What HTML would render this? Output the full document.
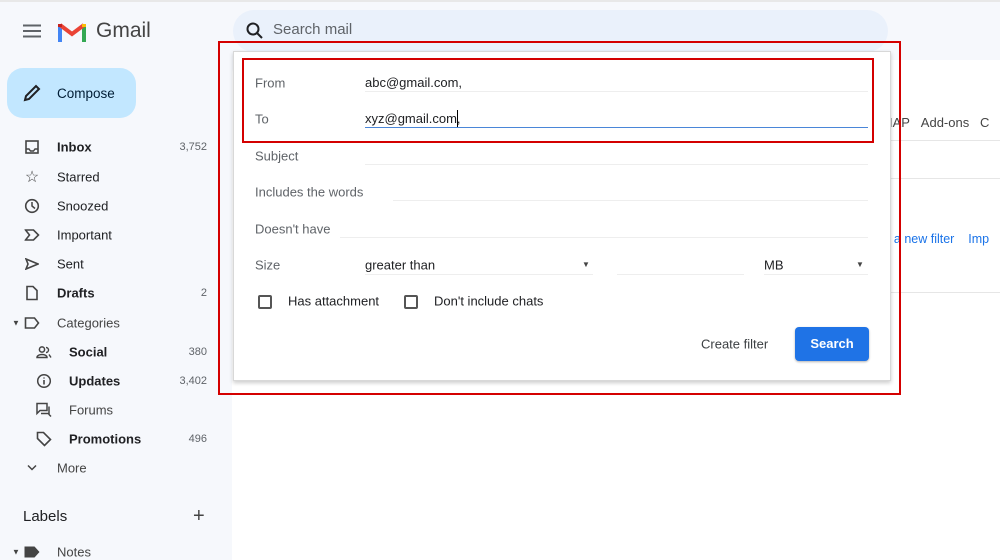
<!DOCTYPE html>
<html><head><meta charset="utf-8"><style>
*{margin:0;padding:0;box-sizing:border-box}
body{width:1000px;height:560px;overflow:hidden;background:#f6f8fc;font-family:"Liberation Sans",Arial,sans-serif;position:relative;color:#202124}
.a{position:absolute;white-space:nowrap}
.nav{font-size:13px;color:#202124;transform:translateY(-50%)}
.b{font-weight:bold}
.cnt{font-size:11px;color:#5f6368;transform:translateY(-50%);right:793px}
.ic{position:absolute;transform:translate(-50%,-50%)}
.lbl{font-size:13px;color:#5f6368;transform:translateY(-50%)}
.ln{position:absolute;height:1px;background:#e6e6e6}
</style></head><body>
<div class="a" style="left:0;top:0;width:1000px;height:2px;background:#e8e8e8"></div>
<!-- main white -->
<div class="a" style="left:232px;top:60px;width:768px;height:500px;background:#fff;border-radius:14px 0 0 0"></div>
<div class="ln" style="left:880px;top:140px;width:120px"></div>
<div class="ln" style="left:880px;top:178px;width:120px"></div>
<div class="ln" style="left:880px;top:292px;width:120px"></div>
<div class="a" style="left:889px;top:115px;font-size:13px;color:#444">IAP&nbsp;&nbsp;&nbsp;Add-ons&nbsp;&nbsp;&nbsp;C</div>
<div class="a" style="left:880px;top:232px;font-size:12.5px;color:#1a73e8">te a new filter&nbsp;&nbsp;&nbsp;&nbsp;Imp</div>
<!-- header -->
<svg class="a" style="left:23px;top:24px" width="18" height="14"><path d="M0 1.5H18M0 7H18M0 12.5H18" stroke="#5f6368" stroke-width="2"/></svg>
<svg class="a" style="left:58px;top:21px" width="28" height="21" viewBox="0 0 28 21"><path d="M2 21V4" stroke="#4285f4" stroke-width="4"/><path d="M26 21V4" stroke="#34a853" stroke-width="4"/><path d="M2 4L14 13L26 4" stroke="#ea4335" stroke-width="4" fill="none"/><path d="M26 3L26 6" stroke="#fbbc04" stroke-width="4"/><path d="M2 3V6" stroke="#c5221f" stroke-width="4"/></svg>
<div class="a" style="left:96px;top:19px;font-size:21px;color:#444">Gmail</div>
<div class="a" style="left:233px;top:10px;width:655px;height:42px;background:#eaf1fb;border-radius:21px"></div>
<svg class="a" style="left:246px;top:22px" width="17" height="17"><circle cx="7" cy="7" r="5.5" stroke="#202124" stroke-width="2" fill="none"/><path d="M11 11L16 16" stroke="#202124" stroke-width="2"/></svg>
<div class="a" style="left:273px;top:21px;font-size:15px;color:#5f6368">Search mail</div>
<!-- compose -->
<div class="a" style="left:7px;top:68px;width:129px;height:50px;background:#c2e7ff;border-radius:16px"></div>
<svg class="a" style="left:23px;top:84px" width="18" height="18"><path d="M2 16L3 12L13 2L16 5L6 15Z" stroke="#202124" stroke-width="2" fill="none"/></svg>
<div class="a" style="left:57px;top:86px;font-size:13.5px;color:#001d35">Compose</div>
<!-- nav -->
<svg class="ic" style="left:32px;top:147px" width="14" height="14"><rect x="1" y="1" width="12" height="12" fill="none" stroke="#444" stroke-width="1.6"/><path d="M1 9H4L5.5 11H8.5L10 9H13" stroke="#444" stroke-width="1.4" fill="none"/></svg>
<div class="a nav b" style="left:57px;top:147px">Inbox</div><div class="a cnt" style="top:147px">3,752</div>
<div class="ic" style="left:32px;top:177px;font-size:16px;color:#444">☆</div><div class="a nav" style="left:57px;top:177px">Starred</div>
<svg class="ic" style="left:32px;top:206px" width="15" height="15"><circle cx="7.5" cy="7.5" r="6.3" fill="none" stroke="#444" stroke-width="1.6"/><path d="M7.5 3.5V7.5L10.5 10" stroke="#444" stroke-width="1.5" fill="none"/></svg>
<div class="a nav" style="left:57px;top:206px">Snoozed</div>
<svg class="ic" style="left:32px;top:235px" width="15" height="12"><path d="M1 1H9L14 6L9 11H1L5 6Z" fill="none" stroke="#444" stroke-width="1.6"/></svg>
<div class="a nav" style="left:57px;top:235px">Important</div>
<svg class="ic" style="left:32px;top:264px" width="14" height="12"><path d="M1 1L13 6L1 11L3 6Z" fill="none" stroke="#444" stroke-width="1.6"/></svg>
<div class="a nav" style="left:57px;top:264px">Sent</div>
<svg class="ic" style="left:32px;top:293px" width="12" height="15"><path d="M1 1H7L11 5V14H1Z" fill="none" stroke="#444" stroke-width="1.6"/></svg>
<div class="a nav b" style="left:57px;top:293px">Drafts</div><div class="a cnt" style="top:293px">2</div>
<div class="ic" style="left:16px;top:323px;font-size:8px;color:#444">▼</div>
<svg class="ic" style="left:32px;top:323px" width="15" height="12"><path d="M1 1H10L14 6L10 11H1Z" fill="none" stroke="#444" stroke-width="1.6"/></svg>
<div class="a nav" style="left:57px;top:323px;color:#444">Categories</div>
<svg class="ic" style="left:44px;top:352px" width="16" height="13"><circle cx="6" cy="4" r="2.6" fill="none" stroke="#444" stroke-width="1.5"/><path d="M1 12C1 8 11 8 11 12Z" fill="none" stroke="#444" stroke-width="1.5"/><path d="M10 2A2.5 2.5 0 0 1 10 7M13 9L15 12" stroke="#444" stroke-width="1.4" fill="none"/></svg>
<div class="a nav b" style="left:69px;top:352px">Social</div><div class="a cnt" style="top:352px">380</div>
<svg class="ic" style="left:44px;top:381px" width="15" height="15"><circle cx="7.5" cy="7.5" r="6.3" fill="none" stroke="#444" stroke-width="1.5"/><path d="M7.5 6.5V11M7.5 4V5" stroke="#444" stroke-width="1.6"/></svg>
<div class="a nav b" style="left:69px;top:381px">Updates</div><div class="a cnt" style="top:381px">3,402</div>
<svg class="ic" style="left:44px;top:410px" width="16" height="15"><path d="M1 1H11V8H4L1 11Z" fill="none" stroke="#444" stroke-width="1.5"/><path d="M13 4V12L15 14M5 11H13" stroke="#444" stroke-width="1.5" fill="none"/></svg>
<div class="a nav" style="left:69px;top:410px;color:#444">Forums</div>
<svg class="ic" style="left:44px;top:439px" width="15" height="15"><path d="M1 1H7L14 8L8 14L1 7Z" fill="none" stroke="#444" stroke-width="1.6"/></svg>
<div class="a nav b" style="left:69px;top:439px">Promotions</div><div class="a cnt" style="top:439px">496</div>
<svg class="ic" style="left:32px;top:468px" width="10" height="7"><path d="M1 1L5 5L9 1" fill="none" stroke="#444" stroke-width="1.5"/></svg>
<div class="a nav" style="left:57px;top:468px;color:#444">More</div>
<div class="a" style="left:23px;top:508px;font-size:15px;color:#202124">Labels</div>
<div class="a" style="left:193px;top:505px;font-size:20px;color:#444">+</div>
<div class="ic" style="left:16px;top:552px;font-size:8px;color:#444">▼</div>
<svg class="ic" style="left:32px;top:552px" width="15" height="11"><path d="M0 0H10L15 5.5L10 11H0Z" fill="#444"/></svg>
<div class="a nav" style="left:57px;top:552px;color:#444">Notes</div>

<!-- dialog -->
<div class="a" style="left:233px;top:51px;width:658px;height:330px;background:#fff;border:1px solid #d8d8d8;box-shadow:0 2px 4px rgba(0,0,0,.2)"></div>
<div class="a lbl" style="left:255px;top:83px">From</div>
<div class="a" style="left:365px;top:75px;font-size:13px;color:#202124">abc@gmail.com,</div>
<div class="ln" style="left:365px;top:91px;width:503px;background:#eee"></div>
<div class="a lbl" style="left:255px;top:119px">To</div>
<div class="a" style="left:365px;top:111px;font-size:13px;color:#202124">xyz@gmail.com,</div>
<div class="a" style="left:457px;top:110px;width:1px;height:17px;background:#000"></div>
<div class="ln" style="left:365px;top:127px;width:503px;background:#4a86d8"></div>
<div class="a lbl" style="left:255px;top:156px">Subject</div>
<div class="ln" style="left:365px;top:164px;width:503px;background:#eee"></div>
<div class="a lbl" style="left:255px;top:192px">Includes the words</div>
<div class="ln" style="left:393px;top:200px;width:475px;background:#eee"></div>
<div class="a lbl" style="left:255px;top:229px">Doesn't have</div>
<div class="ln" style="left:340px;top:237px;width:528px;background:#eee"></div>
<div class="a lbl" style="left:255px;top:265px">Size</div>
<div class="a lbl" style="left:365px;top:265px;color:#202124">greater than</div>
<div class="a" style="left:582px;top:260px;font-size:8px;color:#444">▼</div>
<div class="ln" style="left:365px;top:274px;width:228px;background:#eee"></div>
<div class="ln" style="left:617px;top:274px;width:127px;background:#eee"></div>
<div class="a lbl" style="left:764px;top:265px;color:#202124">MB</div>
<div class="a" style="left:856px;top:260px;font-size:8px;color:#444">▼</div>
<div class="ln" style="left:764px;top:274px;width:104px;background:#eee"></div>
<div class="a" style="left:258px;top:295px;width:14px;height:14px;border:2px solid #555;border-radius:2px"></div>
<div class="a lbl" style="left:288px;top:301px;color:#202124">Has attachment</div>
<div class="a" style="left:404px;top:295px;width:14px;height:14px;border:2px solid #555;border-radius:2px"></div>
<div class="a lbl" style="left:434px;top:301px;color:#202124">Don't include chats</div>
<div class="a lbl" style="left:701px;top:344px;color:#3c4043">Create filter</div>
<div class="a" style="left:795px;top:327px;width:74px;height:34px;background:#1f73e6;border-radius:4px;color:#fff;font-size:13px;font-weight:bold;text-align:center;line-height:34px;box-shadow:0 1px 2px rgba(0,0,0,.3)">Search</div>
<!-- red boxes -->
<div class="a" style="left:218px;top:41px;width:683px;height:354px;border:2px solid #d40000"></div>
<div class="a" style="left:242px;top:58px;width:632px;height:85px;border:2px solid #d40000"></div>
</body></html>
